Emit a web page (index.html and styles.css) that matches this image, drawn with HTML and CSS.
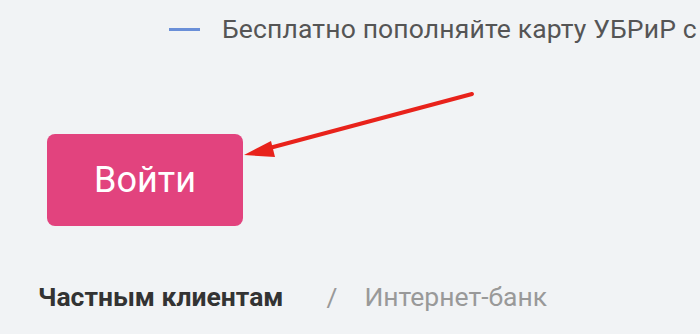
FILE: index.html
```html
<!DOCTYPE html>
<html lang="ru">
<head>
    <meta charset="UTF-8">
    <meta name="viewport" content="width=device-width, initial-scale=1.0">
    <title>Интернет-банк</title>
    <link rel="stylesheet" href="styles.css">
</head>
<body>
    <div class="promo">
        <span class="promo-dash"></span>
        <span class="promo-text">Бесплатно пополняйте карту УБРиР с</span>
    </div>

    <div class="login">
        <button class="login-btn">Войти</button>
    </div>

    <nav class="breadcrumbs">
        <span class="crumb-current">Частным клиентам</span>
        <span class="crumb-sep">/</span>
        <span class="crumb-link">Интернет-банк</span>
    </nav>

    <!-- annotation arrow over the page -->
    <svg class="pointer" width="700" height="334" viewBox="0 0 700 334">
        <line x1="472" y1="94" x2="262" y2="150" stroke="#e8221b" stroke-width="4" stroke-linecap="round"/>
        <polygon points="244,155 271,141 275,157" fill="#e8221b"/>
    </svg>
</body>
</html>
```

FILE: styles.css
```css
* {
    box-sizing: border-box;
    margin: 0;
    padding: 0;
}
body {
    font-family: Roboto, "Liberation Sans", sans-serif;
    background-color: #f1f3f5;
    width: 700px;
    height: 334px;
    overflow: hidden;
    position: relative;
}
.promo {
    display: flex;
    align-items: center;
    gap: 22px;
    padding: 14px 0 0 169px;
    white-space: nowrap;
}
.promo-dash {
    width: 31px;
    height: 3px;
    background-color: #6a8fd8;
    flex-shrink: 0;
}
.promo-text {
    font-size: 26.5px;
    line-height: 30px;
    letter-spacing: 0.15px;
    color: #555;
}
.login {
    padding: 90px 0 0 47px;
}
.login-btn {
    width: 196px;
    height: 92px;
    border: none;
    border-radius: 8px;
    background-color: #e2437e;
    color: #fff;
    font-family: Roboto, "Liberation Sans", sans-serif;
    font-size: 36px;
}
.breadcrumbs {
    display: flex;
    align-items: center;
    padding: 56px 0 0 38px;
    font-size: 26.5px;
    line-height: 30px;
}
.crumb-current {
    font-weight: bold;
    color: #333;
}
.crumb-sep {
    color: #999;
    margin: 0 27px 0 43px;
}
.crumb-link {
    color: #999;
}
.pointer {
    position: absolute;
    left: 0;
    top: 0;
}
```
